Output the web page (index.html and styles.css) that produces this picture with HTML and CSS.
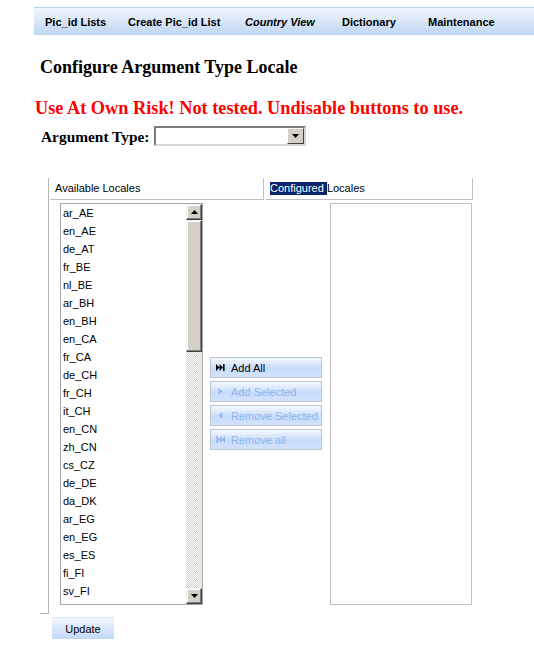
FILE: index.html
```html
<!DOCTYPE html>
<html>
<head>
<meta charset="utf-8">
<title>Configure Argument Type Locale</title>
<link rel="stylesheet" href="styles.css">
</head>
<body>
<div class="nav">
  <span class="nav-item w1">Pic_id Lists</span>
  <span class="nav-item w2">Create Pic_id List</span>
  <span class="nav-item w3 current">Country View</span>
  <span class="nav-item w4">Dictionary</span>
  <span class="nav-item">Maintenance</span>
</div>

<h1 class="title">Configure Argument Type Locale</h1>
<p class="warning">Use At Own Risk! Not tested. Undisable buttons to use.</p>

<div class="arg-row">
  <span class="arg-label">Argument Type:</span>
  <span class="select"><span class="select-btn"><svg width="7" height="4" viewBox="0 0 7 4"><path d="M0 0h7L3.5 4z" fill="#000"/></svg></span></span>
</div>

<div class="frame">
  <div class="stub"></div>
  <div class="panel">
    <div class="tabs">
      <div class="tab tab-left">Available Locales</div>
      <div class="tab tab-right"><span class="sel">Configured&nbsp;</span>Locales</div>
    </div>
    <div class="lists">
      <div class="listbox avail">
        <ul class="items">
          <li>ar_AE</li><li>en_AE</li><li>de_AT</li><li>fr_BE</li><li>nl_BE</li>
          <li>ar_BH</li><li>en_BH</li><li>en_CA</li><li>fr_CA</li><li>de_CH</li>
          <li>fr_CH</li><li>it_CH</li><li>en_CN</li><li>zh_CN</li><li>cs_CZ</li>
          <li>de_DE</li><li>da_DK</li><li>ar_EG</li><li>en_EG</li><li>es_ES</li>
          <li>fi_FI</li><li>sv_FI</li>
        </ul>
        <div class="scrollbar">
          <div class="sb-btn"><svg width="7" height="4" viewBox="0 0 7 4"><path d="M3.5 0L7 4H0z" fill="#000"/></svg></div>
          <div class="sb-thumb"></div>
          <div class="sb-track"></div>
          <div class="sb-btn"><svg width="7" height="4" viewBox="0 0 7 4"><path d="M0 0h7L3.5 4z" fill="#000"/></svg></div>
        </div>
      </div>
      <div class="actions">
        <div class="btn"><svg class="ico" width="9" height="7" viewBox="0 0 9 7"><path d="M0 0l3.5 3.5L0 7zM3.5 0L7 3.5 3.5 7z" fill="#000"/><rect x="7" y="0" width="1.6" height="7" fill="#000"/></svg>Add All</div>
        <div class="btn disabled"><svg class="ico" width="9" height="7" viewBox="0 0 9 7"><path d="M2.5 0l4 3.5-4 3.5z" fill="#8fb6f0"/></svg>Add Selected</div>
        <div class="btn disabled"><svg class="ico" width="9" height="7" viewBox="0 0 9 7"><path d="M6.5 0l-4 3.5 4 3.5z" fill="#8fb6f0"/></svg>Remove Selected</div>
        <div class="btn disabled"><svg class="ico" width="9" height="7" viewBox="0 0 9 7"><rect x="0.4" y="0" width="1.6" height="7" fill="#8fb6f0"/><path d="M5.5 0L2 3.5 5.5 7zM9 0L5.5 3.5 9 7z" fill="#8fb6f0"/></svg>Remove all</div>
      </div>
      <div class="listbox configured"></div>
    </div>
  </div>
</div>

<div class="update-row"><span class="update">Update</span></div>
</body>
</html>
```

FILE: styles.css
```css
html, body {
  margin: 0;
  padding: 0;
  background: #fff;
}
body {
  font-family: "Liberation Sans", Arial, sans-serif;
  font-size: 11px;
  color: #000;
}
.nav {
  margin: 7px 0 0 34px;
  height: 28px;
  border-top: 1px solid #b9cfec;
  background: linear-gradient(#f1f6fd, #bfd6f3);
  display: flex;
  align-items: center;
  padding-left: 11px;
  box-sizing: border-box;
}
.nav-item {
  font-weight: bold;
  font-size: 11px;
  white-space: nowrap;
}
.w1 { width: 83px; }
.w2 { width: 117px; }
.w3 { width: 97px; }
.w4 { width: 86px; }
.current { font-style: italic; }

.title {
  font-family: "Liberation Serif", "Times New Roman", serif;
  font-size: 18px;
  line-height: 20px;
  font-weight: bold;
  margin: 22px 0 0 40px;
}
.warning {
  font-family: "Liberation Serif", "Times New Roman", serif;
  font-size: 18.3px;
  line-height: 20px;
  font-weight: bold;
  color: #ff0000;
  margin: 21px 0 0 35px;
}
.arg-row {
  display: flex;
  align-items: center;
  margin: 8px 0 0 41px;
  height: 20px;
}
.arg-label {
  font-family: "Liberation Serif", "Times New Roman", serif;
  font-size: 15.4px;
  font-weight: bold;
  margin-right: 5px;
  padding-top: 1px;
}
.select {
  width: 148px;
  height: 16px;
  border-top: 2px solid #7b7b7b;
  border-left: 2px solid #7b7b7b;
  border-right: 2px solid #d8d8d8;
  border-bottom: 2px solid #d8d8d8;
  background: #fff;
  display: flex;
  justify-content: flex-end;
  box-sizing: content-box;
}
.select-btn {
  width: 15px;
  height: 14px;
  background: #d4d0c8;
  border-top: 1px solid #fff;
  border-left: 1px solid #fff;
  border-right: 1px solid #404040;
  border-bottom: 1px solid #404040;
  display: flex;
  align-items: center;
  justify-content: center;
  box-sizing: content-box;
}

.frame {
  display: flex;
  margin: 32px 0 0 40px;
}
.stub {
  width: 8px;
  border-bottom: 1px solid #b4b4b4;
}
.panel {
  border-left: 1px solid #b4b4b4;
  width: 424px;
  height: 436px;
}
.tabs {
  display: flex;
  height: 22px;
}
.tab {
  border-right: 1px solid #c0c0c0;
  border-bottom: 1px solid #c0c0c0;
  line-height: 21px;
  height: 21px;
  font-size: 11px;
}
.tab-left {
  margin-left: 1px;
  width: 208px;
  padding-left: 5px;
}
.tab-right {
  margin-left: 2px;
  width: 202px;
  padding-left: 4px;
}
.sel {
  background: #0a246a;
  color: #fff;
  display: inline-block;
  line-height: 13px;
}

.lists {
  display: flex;
  margin-top: 3px;
  align-items: flex-start;
}
.listbox {
  height: 400px;
  background: #fff;
}
.avail {
  margin-left: 11px;
  width: 141px;
  border: 1px solid #a8a8a8;
  display: flex;
}
.items {
  list-style: none;
  margin: 0;
  padding: 0 0 0 2px;
  flex: 1;
}
.items li {
  height: 18px;
  line-height: 18px;
  font-size: 11px;
}
.scrollbar {
  width: 16px;
  display: flex;
  flex-direction: column;
}
.sb-btn, .sb-thumb {
  background: #d4d0c8;
  border-top: 1px solid #eeeeee;
  border-left: 1px solid #eeeeee;
  border-right: 1px solid #404040;
  border-bottom: 1px solid #404040;
  box-shadow: inset -1px -1px 0 #808080, inset 1px 1px 0 #fff;
  box-sizing: border-box;
}
.sb-btn {
  height: 16px;
  display: flex;
  align-items: center;
  justify-content: center;
}
.sb-thumb {
  height: 132px;
}
.sb-track {
  flex: 1;
  background: repeating-conic-gradient(#d4d0c8 0 25%, #ffffff 0 50%) 0 0 / 2px 2px;
}

.actions {
  margin: 154px 0 0 7px;
  width: 112px;
  display: flex;
  flex-direction: column;
  gap: 3px;
}
.btn {
  height: 19px;
  border: 1px solid #bcc4d0;
  background: linear-gradient(#f6f9fe, #c8dcfa 55%, #d2e3fb);
  display: flex;
  align-items: center;
  font-size: 11px;
  padding-left: 5px;
}
.btn.disabled {
  color: #8fb6f0;
}
.ico {
  margin-right: 6px;
}
.configured {
  margin-left: 8px;
  width: 140px;
  border: 1px solid #c0c0c0;
}

.update-row {
  margin: 3px 0 0 52px;
}
.update {
  display: inline-flex;
  align-items: center;
  justify-content: center;
  width: 62px;
  height: 22px;
  background: linear-gradient(#f2f7fe, #c0d8f8);
  border-top: 1px solid #d8e6f8;
  box-sizing: border-box;
  font-size: 11px;
}
```
